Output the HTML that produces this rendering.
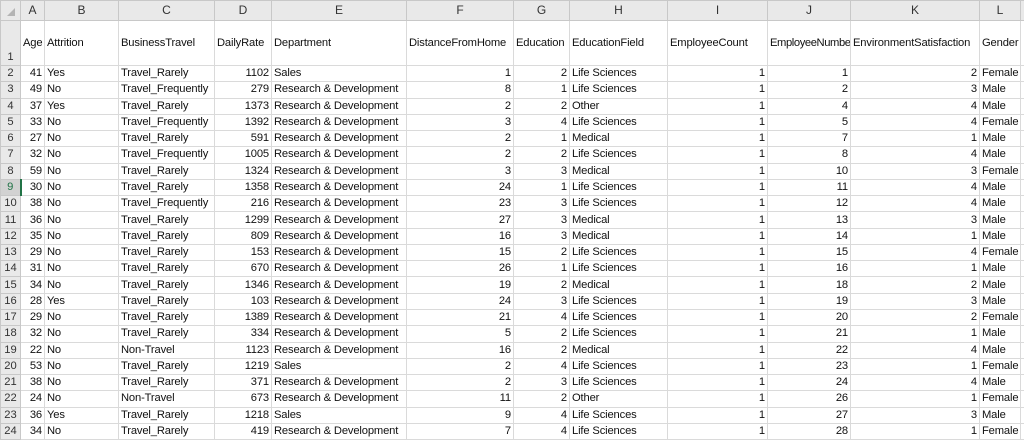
<!DOCTYPE html>
<html><head><meta charset="utf-8"><style>
html,body{margin:0;padding:0;background:#fff;width:1024px;height:440px;overflow:hidden}
table{border-collapse:collapse;table-layout:fixed;width:1030px;font-family:"Liberation Sans",Arial,sans-serif;font-size:11.2px;letter-spacing:-0.15px;color:#111;position:absolute;left:0;top:0}
td{border:1px solid #dadada;padding:0 2px;white-space:nowrap;overflow:hidden;height:15.27px;line-height:15px}
tr.h td{background:#e9e9e9;color:#333;text-align:center;height:19px;border-color:#c8c8c8;font-size:12px;letter-spacing:0}
tr.r1 td{height:44px;vertical-align:middle}
td.n{text-align:right}
td.rh{background:#e9e9e9;color:#333;text-align:center;border-color:#c8c8c8;padding:0;letter-spacing:0}
td.sel{background:#d2d2d2;color:#217346;border-right:2px solid #217346}
tr.r1 td.rh{vertical-align:bottom}
td.tight{padding:0 0 0 2px;letter-spacing:-0.4px}
.tri{display:inline-block;width:0;height:0;border-left:8px solid transparent;border-bottom:8px solid #b4b4b4;margin-top:6px}
</style></head><body>
<table>
<colgroup><col style="width:20px"><col style="width:24px"><col style="width:74px"><col style="width:96px"><col style="width:57px"><col style="width:135px"><col style="width:107px"><col style="width:56px"><col style="width:98px"><col style="width:100px"><col style="width:83px"><col style="width:129px"><col style="width:41px"><col style="width:10px"></colgroup>
<tr class="h"><td><span class="tri"></span></td><td>A</td><td>B</td><td>C</td><td>D</td><td>E</td><td>F</td><td>G</td><td>H</td><td>I</td><td>J</td><td>K</td><td>L</td><td></td></tr>
<tr class="r1"><td class="rh">1</td><td>Age</td><td>Attrition</td><td>BusinessTravel</td><td>DailyRate</td><td>Department</td><td>DistanceFromHome</td><td>Education</td><td>EducationField</td><td>EmployeeCount</td><td class="tight">EmployeeNumber</td><td>EnvironmentSatisfaction</td><td>Gender</td><td></td></tr>
<tr><td class="rh">2</td><td class="n">41</td><td>Yes</td><td>Travel_Rarely</td><td class="n">1102</td><td>Sales</td><td class="n">1</td><td class="n">2</td><td>Life Sciences</td><td class="n">1</td><td class="n">1</td><td class="n">2</td><td>Female</td><td></td></tr>
<tr><td class="rh">3</td><td class="n">49</td><td>No</td><td>Travel_Frequently</td><td class="n">279</td><td>Research &amp; Development</td><td class="n">8</td><td class="n">1</td><td>Life Sciences</td><td class="n">1</td><td class="n">2</td><td class="n">3</td><td>Male</td><td></td></tr>
<tr><td class="rh">4</td><td class="n">37</td><td>Yes</td><td>Travel_Rarely</td><td class="n">1373</td><td>Research &amp; Development</td><td class="n">2</td><td class="n">2</td><td>Other</td><td class="n">1</td><td class="n">4</td><td class="n">4</td><td>Male</td><td></td></tr>
<tr><td class="rh">5</td><td class="n">33</td><td>No</td><td>Travel_Frequently</td><td class="n">1392</td><td>Research &amp; Development</td><td class="n">3</td><td class="n">4</td><td>Life Sciences</td><td class="n">1</td><td class="n">5</td><td class="n">4</td><td>Female</td><td></td></tr>
<tr><td class="rh">6</td><td class="n">27</td><td>No</td><td>Travel_Rarely</td><td class="n">591</td><td>Research &amp; Development</td><td class="n">2</td><td class="n">1</td><td>Medical</td><td class="n">1</td><td class="n">7</td><td class="n">1</td><td>Male</td><td></td></tr>
<tr><td class="rh">7</td><td class="n">32</td><td>No</td><td>Travel_Frequently</td><td class="n">1005</td><td>Research &amp; Development</td><td class="n">2</td><td class="n">2</td><td>Life Sciences</td><td class="n">1</td><td class="n">8</td><td class="n">4</td><td>Male</td><td></td></tr>
<tr><td class="rh">8</td><td class="n">59</td><td>No</td><td>Travel_Rarely</td><td class="n">1324</td><td>Research &amp; Development</td><td class="n">3</td><td class="n">3</td><td>Medical</td><td class="n">1</td><td class="n">10</td><td class="n">3</td><td>Female</td><td></td></tr>
<tr><td class="rh sel">9</td><td class="n">30</td><td>No</td><td>Travel_Rarely</td><td class="n">1358</td><td>Research &amp; Development</td><td class="n">24</td><td class="n">1</td><td>Life Sciences</td><td class="n">1</td><td class="n">11</td><td class="n">4</td><td>Male</td><td></td></tr>
<tr><td class="rh">10</td><td class="n">38</td><td>No</td><td>Travel_Frequently</td><td class="n">216</td><td>Research &amp; Development</td><td class="n">23</td><td class="n">3</td><td>Life Sciences</td><td class="n">1</td><td class="n">12</td><td class="n">4</td><td>Male</td><td></td></tr>
<tr><td class="rh">11</td><td class="n">36</td><td>No</td><td>Travel_Rarely</td><td class="n">1299</td><td>Research &amp; Development</td><td class="n">27</td><td class="n">3</td><td>Medical</td><td class="n">1</td><td class="n">13</td><td class="n">3</td><td>Male</td><td></td></tr>
<tr><td class="rh">12</td><td class="n">35</td><td>No</td><td>Travel_Rarely</td><td class="n">809</td><td>Research &amp; Development</td><td class="n">16</td><td class="n">3</td><td>Medical</td><td class="n">1</td><td class="n">14</td><td class="n">1</td><td>Male</td><td></td></tr>
<tr><td class="rh">13</td><td class="n">29</td><td>No</td><td>Travel_Rarely</td><td class="n">153</td><td>Research &amp; Development</td><td class="n">15</td><td class="n">2</td><td>Life Sciences</td><td class="n">1</td><td class="n">15</td><td class="n">4</td><td>Female</td><td></td></tr>
<tr><td class="rh">14</td><td class="n">31</td><td>No</td><td>Travel_Rarely</td><td class="n">670</td><td>Research &amp; Development</td><td class="n">26</td><td class="n">1</td><td>Life Sciences</td><td class="n">1</td><td class="n">16</td><td class="n">1</td><td>Male</td><td></td></tr>
<tr><td class="rh">15</td><td class="n">34</td><td>No</td><td>Travel_Rarely</td><td class="n">1346</td><td>Research &amp; Development</td><td class="n">19</td><td class="n">2</td><td>Medical</td><td class="n">1</td><td class="n">18</td><td class="n">2</td><td>Male</td><td></td></tr>
<tr><td class="rh">16</td><td class="n">28</td><td>Yes</td><td>Travel_Rarely</td><td class="n">103</td><td>Research &amp; Development</td><td class="n">24</td><td class="n">3</td><td>Life Sciences</td><td class="n">1</td><td class="n">19</td><td class="n">3</td><td>Male</td><td></td></tr>
<tr><td class="rh">17</td><td class="n">29</td><td>No</td><td>Travel_Rarely</td><td class="n">1389</td><td>Research &amp; Development</td><td class="n">21</td><td class="n">4</td><td>Life Sciences</td><td class="n">1</td><td class="n">20</td><td class="n">2</td><td>Female</td><td></td></tr>
<tr><td class="rh">18</td><td class="n">32</td><td>No</td><td>Travel_Rarely</td><td class="n">334</td><td>Research &amp; Development</td><td class="n">5</td><td class="n">2</td><td>Life Sciences</td><td class="n">1</td><td class="n">21</td><td class="n">1</td><td>Male</td><td></td></tr>
<tr><td class="rh">19</td><td class="n">22</td><td>No</td><td>Non-Travel</td><td class="n">1123</td><td>Research &amp; Development</td><td class="n">16</td><td class="n">2</td><td>Medical</td><td class="n">1</td><td class="n">22</td><td class="n">4</td><td>Male</td><td></td></tr>
<tr><td class="rh">20</td><td class="n">53</td><td>No</td><td>Travel_Rarely</td><td class="n">1219</td><td>Sales</td><td class="n">2</td><td class="n">4</td><td>Life Sciences</td><td class="n">1</td><td class="n">23</td><td class="n">1</td><td>Female</td><td></td></tr>
<tr><td class="rh">21</td><td class="n">38</td><td>No</td><td>Travel_Rarely</td><td class="n">371</td><td>Research &amp; Development</td><td class="n">2</td><td class="n">3</td><td>Life Sciences</td><td class="n">1</td><td class="n">24</td><td class="n">4</td><td>Male</td><td></td></tr>
<tr><td class="rh">22</td><td class="n">24</td><td>No</td><td>Non-Travel</td><td class="n">673</td><td>Research &amp; Development</td><td class="n">11</td><td class="n">2</td><td>Other</td><td class="n">1</td><td class="n">26</td><td class="n">1</td><td>Female</td><td></td></tr>
<tr><td class="rh">23</td><td class="n">36</td><td>Yes</td><td>Travel_Rarely</td><td class="n">1218</td><td>Sales</td><td class="n">9</td><td class="n">4</td><td>Life Sciences</td><td class="n">1</td><td class="n">27</td><td class="n">3</td><td>Male</td><td></td></tr>
<tr><td class="rh">24</td><td class="n">34</td><td>No</td><td>Travel_Rarely</td><td class="n">419</td><td>Research &amp; Development</td><td class="n">7</td><td class="n">4</td><td>Life Sciences</td><td class="n">1</td><td class="n">28</td><td class="n">1</td><td>Female</td><td></td></tr>
</table>
</body></html>
